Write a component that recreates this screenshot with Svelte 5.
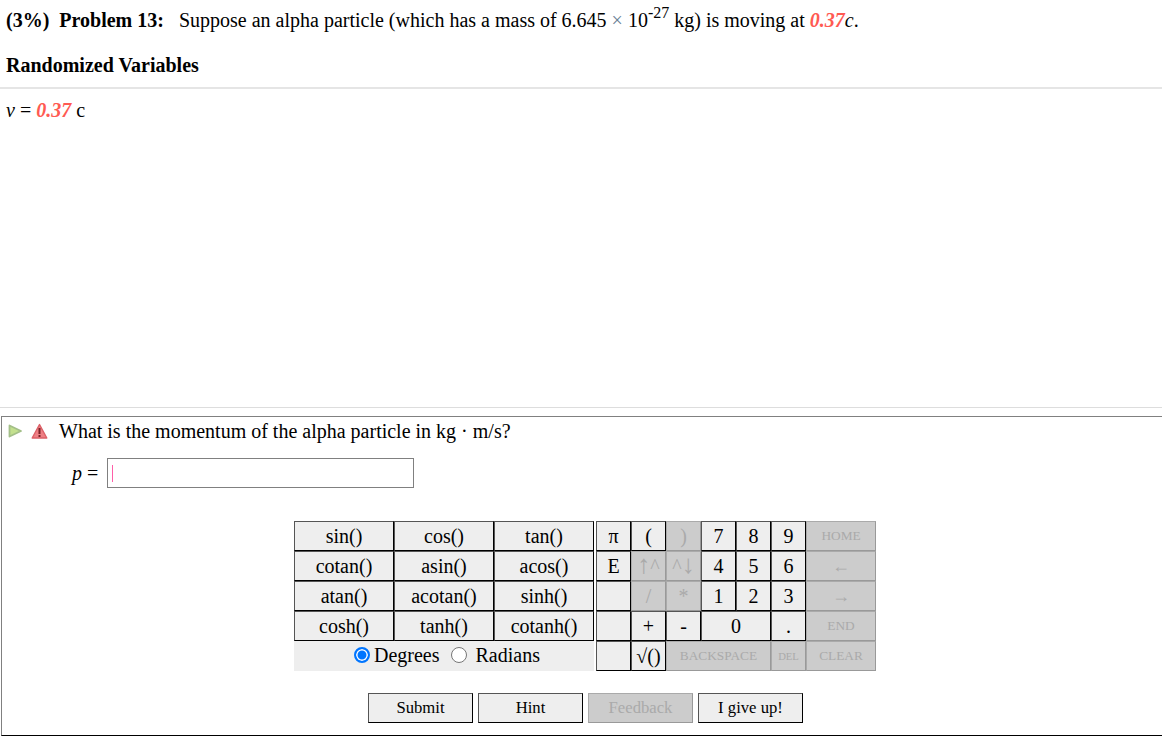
<script>
    const funcs = [
        "sin()", "cos()", "tan()",
        "cotan()", "asin()", "acos()",
        "atan()", "acotan()", "sinh()",
        "cosh()", "tanh()", "cotanh()",
    ];

    // span = grid columns, off = greyed out key, size = label size class, up/down = tall arrow
    const keys = [
        { t: "π" }, { t: "(" }, { t: ")", off: true }, { t: "7" }, { t: "8" }, { t: "9" }, { t: "HOME", off: true, size: "sm", span: 2 },
        { t: "E" }, { t: "^", up: true, off: true }, { t: "^", down: true, off: true }, { t: "4" }, { t: "5" }, { t: "6" }, { t: "←", off: true, size: "arr", span: 2 },
        { t: "" }, { t: "/", off: true }, { t: "*", off: true }, { t: "1" }, { t: "2" }, { t: "3" }, { t: "→", off: true, size: "arr", span: 2 },
        { t: "" }, { t: "+" }, { t: "-" }, { t: "0", span: 2 }, { t: "." }, { t: "END", off: true, size: "sm", span: 2 },
        { t: "" }, { t: "√()" }, { t: "BACKSPACE", off: true, size: "sm", span: 3 }, { t: "DEL", off: true, size: "xs" }, { t: "CLEAR", off: true, size: "sm", span: 2 },
    ];

    const actions = [
        { t: "Submit" },
        { t: "Hint" },
        { t: "Feedback", off: true },
        { t: "I give up!" },
    ];
</script>

<div class="page">
    <p class="problem">
        <b>(3%)&nbsp; Problem 13:</b>
        <span class="stem">Suppose an alpha particle (which has a mass of 6.645 <span class="times">×</span> 10<sup>-27</sup> kg) is moving at <b class="rand">0.37</b><i>c</i>.</span>
    </p>

    <h2>Randomized Variables</h2>
    <p class="vars"><i>v</i> = <b class="rand">0.37</b> c</p>

    <hr />

    <section class="panel">
        <div class="question">
            <svg class="icon" width="16" height="14" viewBox="0 0 16 14">
                <path d="M2.5 1.5 L14 7 L2.5 12.5 Z" fill="#c3e08e" stroke="#a3bf88" stroke-width="1.8" stroke-linejoin="round" />
            </svg>
            <svg class="icon warn" width="17" height="17" viewBox="0 0 17 17">
                <path d="M8.5 1.5 L15.8 15 H1.2 Z" fill="#ee7f84" stroke="#dc6067" stroke-width="1.4" stroke-linejoin="round" />
                <rect x="7.5" y="5" width="2" height="6" fill="#7a2226" />
                <rect x="7.5" y="12" width="2" height="2" fill="#7a2226" />
            </svg>
            <span>What is the momentum of the alpha particle in kg · m/s?</span>
        </div>

        <div class="answer">
            <span class="label"><i>p</i>&nbsp;=</span>
            <div class="field"><span class="caret"></span></div>
        </div>

        <div class="keypad">
            <div class="left">
                <div class="funcs">
                    {#each funcs as f}
                        <button class="key">{f}</button>
                    {/each}
                </div>
                <div class="modes">
                    <span class="radio on"></span>
                    <span class="mode">Degrees</span>
                    <span class="radio"></span>
                    <span class="mode second">Radians</span>
                </div>
            </div>
            <div class="keys">
                {#each keys as k}
                    <button
                        class="key {k.size ?? ''}"
                        class:off={k.off}
                        style={k.span ? `grid-column: span ${k.span}` : undefined}
                    >{#if k.up}<span class="tall">↑</span>{/if}{k.t}{#if k.down}<span class="tall">↓</span>{/if}</button>
                {/each}
            </div>
        </div>

        <div class="actions">
            {#each actions as a}
                <button class="key action" class:off={a.off}>{a.t}</button>
            {/each}
        </div>
    </section>
</div>

<style>
    :global(body) {
        margin: 0;
        background: #fff;
    }

    .page {
        width: 1162px;
        height: 736px;
        overflow: hidden;
        font-family: "Liberation Serif", serif;
        font-size: 20px;
        color: #000;
    }

    p,
    h2 {
        margin: 0;
    }

    .problem {
        padding: 9px 0 0 6px;
        height: 36px;
        line-height: 22px;
        white-space: nowrap;
    }

    .stem {
        margin-left: 10px;
    }

    .times {
        color: #6a7f96;
    }

    sup {
        font-size: 16px;
        line-height: 0;
        vertical-align: 9px;
    }

    .rand {
        color: #ff5a52;
        font-style: italic;
    }

    h2 {
        padding: 9px 0 0 6px;
        font-size: 20px;
        font-weight: bold;
        line-height: 22px;
        border-bottom: 2px solid #e5e5e5;
        height: 33px;
    }

    .vars {
        padding: 10px 0 0 6px;
        height: 318px;
        line-height: 22px;
        box-sizing: border-box;
    }

    hr {
        margin: 0;
        border: none;
        border-top: 1px solid #ddd;
    }

    .panel {
        margin: 8px 0 0 1px;
        height: 320px;
        box-sizing: border-box;
        border-top: 1px solid #808080;
        border-left: 1px solid #808080;
        border-bottom: 1px solid #000;
    }

    .question {
        display: flex;
        align-items: center;
        height: 28px;
        padding: 0 0 0 5px;
        line-height: 22px;
    }

    .icon {
        flex: none;
    }

    .warn {
        margin-left: 8px;
        margin-right: 11px;
    }

    .answer {
        display: flex;
        align-items: center;
        margin-top: 13px;
        padding-left: 70px;
    }

    .label {
        width: 35px;
        white-space: nowrap;
    }

    .field {
        display: flex;
        align-items: center;
        width: 307px;
        height: 30px;
        box-sizing: border-box;
        border: 1px solid #808080;
        padding-left: 4px;
    }

    .caret {
        width: 1px;
        height: 17px;
        background: #ff5fa8;
    }

    .keypad {
        display: flex;
        gap: 2px;
        margin: 33px 0 0 292px;
    }

    .funcs {
        display: grid;
        grid-template-columns: repeat(3, 100px);
        grid-auto-rows: 30px;
    }

    .keys {
        display: grid;
        grid-template-columns: repeat(8, 35px);
        grid-auto-rows: 30px;
    }

    .key {
        padding: 0;
        margin: 0;
        box-sizing: border-box;
        font-family: inherit;
        font-size: 20px;
        color: #000;
        background: #eee;
        border-style: solid;
        border-width: 1px;
        border-color: #555 #000 #000 #555;
        white-space: nowrap;
        overflow: hidden;
    }

    .key.off {
        background: #ccc;
        color: #aaa;
        border-color: #aaa #999 #999 #aaa;
    }

    .key.sm {
        font-size: 13.33px;
    }

    .key.xs {
        font-size: 10.67px;
    }

    .key.arr {
        font-size: 18px;
    }

    .tall {
        font-size: 26px;
        line-height: 0;
    }

    .modes {
        display: flex;
        align-items: center;
        height: 28px;
        padding-bottom: 2px;
        background: #eee;
        padding-left: 60px;
    }

    .radio {
        width: 16px;
        height: 16px;
        box-sizing: border-box;
        border-radius: 50%;
        border: 1px solid #767676;
        background: #fff;
    }

    .radio.on {
        border: 2px solid #0075ff;
        box-shadow: inset 0 0 0 1.5px #fff;
        background: #0075ff;
    }

    .mode {
        margin-left: 4px;
        margin-right: 11px;
    }

    .mode.second {
        margin-left: 9px;
    }

    .actions {
        display: flex;
        gap: 5px;
        margin: 22px 0 0 366px;
    }

    .action {
        width: 105px;
        height: 30px;
        font-size: 16.67px;
    }
</style>
